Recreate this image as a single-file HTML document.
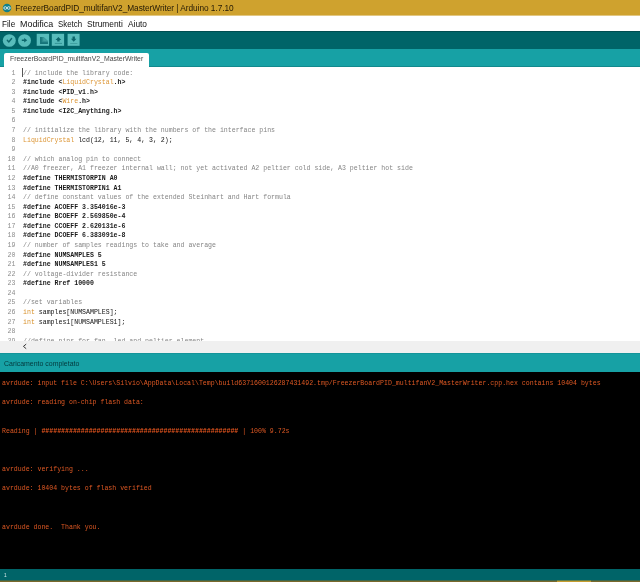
<!DOCTYPE html>
<html><head><meta charset="utf-8"><title>Arduino</title>
<style>
html,body{margin:0;padding:0;}
body{width:640px;height:582px;overflow:hidden;position:relative;background:#fff;font-family:"Liberation Sans",sans-serif;}
.abs{position:absolute;}
#title{left:0;top:0;width:640px;height:15.6px;background:#cfa22e;}
#title .t{position:absolute;left:15.3px;top:2.9px;font-size:8.3px;line-height:11px;color:#231905;white-space:nowrap;letter-spacing:-0.04px;}
#logo{position:absolute;left:0.75px;top:1.7px;}
#menu{left:0;top:15.6px;width:640px;height:15.6px;background:#fff;}
#menu span{position:absolute;top:2.3px;transform-origin:0 0;font-size:9.6px;line-height:12px;color:#111;white-space:nowrap;}
#tool{left:0;top:31.2px;width:640px;height:17.5px;background:#006468;}
#tabs{left:0;top:48.5px;width:640px;height:18.5px;background:#17a1a5;}
#tab{left:4px;top:52.5px;width:145px;height:15px;background:#fff;border-radius:2px 2px 0 0;}
#tab span{position:absolute;left:5.7px;top:0.8px;transform-origin:0 0;transform:scaleX(0.933);font-size:7.4px;line-height:11px;color:#454545;white-space:nowrap;}
.btn{position:absolute;background:#4db6ba;}
#editor{left:0;top:67px;width:640px;height:274px;background:#fff;overflow:hidden;}
#code{position:absolute;left:0;top:1.5999999999999943px;font-family:"Liberation Mono",monospace;font-size:6.575px;line-height:9.585px;white-space:pre;color:#222;}
.ln{height:9.585px;position:relative;padding-left:23px;}
.no{position:absolute;left:0;width:15.5px;text-align:right;color:#8c8c8c;}
.c{color:#858585;}
.p{color:#1a1a1a;font-weight:bold;}
.k{color:#dc9534;}
.t{color:#d8922e;}
.n{color:#111;}
#caret{left:22px;top:67.5px;width:1px;height:9px;background:#555;}
#hscroll{left:0;top:341px;width:640px;height:12px;background:#f0f0f0;}
#status{left:0;top:353px;width:640px;height:19px;background:#17a1a5;}
#status span{position:absolute;left:4px;top:4.7px;transform-origin:0 0;transform:scaleX(0.94);font-size:7.4px;line-height:11px;color:#04383c;white-space:nowrap;}
#console{left:0;top:372px;width:640px;height:197px;background:#000;overflow:hidden;}
#ctext{position:absolute;left:2px;top:6.899999999999977px;font-family:"Liberation Mono",monospace;font-size:6.575px;line-height:9.6px;white-space:pre;color:#de5823;}
.cl{height:9.6px;}
#foot{left:0;top:569px;width:640px;height:11px;background:#006468;}
#foot span{position:absolute;left:4.3px;top:1.8px;font-size:6px;line-height:9px;color:#d8ecec;transform-origin:0 0;transform:scaleX(0.8);}
#task{left:0;top:580px;width:640px;height:2px;background:linear-gradient(#3d664a 0,#3d664a 1px,#7a692c 1px);}
#taskhl{left:557px;top:580px;width:34px;height:2px;background:linear-gradient(#63804b 0,#63804b 1px,#c79d2f 1px);}
#code,#ctext,#title .t,#menu span,#tab span,#status span,#foot span{filter:blur(0.35px);}
#ctext b{color:#e8561f;}
</style></head><body>
<div id="title" class="abs"><svg id="logo" width="12" height="12" viewBox="0 0 12 12"><circle cx="6" cy="6" r="4.3" fill="#11808a"/><g fill="none" stroke="#e8f2f2" stroke-width="0.9"><ellipse cx="4.3" cy="6" rx="1.5" ry="1.3"/><ellipse cx="7.7" cy="6" rx="1.5" ry="1.3"/></g></svg><div class="t">FreezerBoardPID_multifanV2_MasterWriter | Arduino 1.7.10</div></div>
<div id="menu" class="abs"><span style="left:2.30px;transform:scaleX(0.853)">File</span><span style="left:19.70px;transform:scaleX(0.929)">Modifica</span><span style="left:57.70px;transform:scaleX(0.818)">Sketch</span><span style="left:86.70px;transform:scaleX(0.872)">Strumenti</span><span style="left:127.70px;transform:scaleX(0.869)">Aiuto</span></div>
<div class="abs" style="left:0;top:15px;width:640px;height:1px;background:#e2c782"></div>
<div id="tool" class="abs"></div>
<div id="tabs" class="abs"></div>
<div class="abs" style="left:0;top:31px;width:640px;height:1px;background:#004d51"></div><div class="abs" style="left:0;top:66px;width:640px;height:1px;background:#12898d"></div><div class="abs" style="left:0;top:353px;width:640px;height:1px;background:#14959a;z-index:3"></div>
<svg class="abs" style="left:0;top:31px" width="90" height="18" viewBox="0 31 90 18">
<g fill="#58bcbb"><ellipse cx="9.3" cy="40.5" rx="6.5" ry="6.3"/><ellipse cx="24.5" cy="40.5" rx="6.5" ry="6.3"/>
<rect x="36.7" y="33.8" width="12.4" height="12"/><rect x="51.8" y="33.8" width="12.3" height="12"/><rect x="67.6" y="33.8" width="12" height="12"/></g>
<path d="M7.3 40.3 L8.8 42 L11.6 38.5" fill="none" stroke="#0c676c" stroke-width="1.35" stroke-linecap="round" stroke-linejoin="round"/>
<g fill="#0c676c">
<path d="M21.8 39.5 H24.2 V38 L27.2 40.3 L24.2 42.6 V41.1 H21.8 Z"/>
<path d="M40.1 36.9 H43.6 L47.9 41 V43.9 H40.1 Z" fill="#2a8a8c"/>
<path d="M40.1 36.9 H41.6 V42.2 H47.9 V43.9 H40.1 Z" fill="#157479"/>
<path d="M43.2 36.9 L47.9 41.2 H43.2 Z" fill="#3f9fa0"/>
<path d="M58.4 37 L61.3 40 H59.6 V41.6 H57.2 V40 H55.5 Z"/><rect x="54.8" y="42.9" width="7.2" height="0.9" fill="#2d8f91"/>
<path d="M73.7 41.7 L76.5 38.7 H74.9 V36.5 H72.5 V38.7 H70.9 Z"/><rect x="70.2" y="43.2" width="7.2" height="0.8" fill="#3a9a9b"/>
</g></svg>
<div id="tab" class="abs"><span>FreezerBoardPID_multifanV2_MasterWriter</span></div>
<div id="editor" class="abs"><div id="code"><div class="ln"><span class="no">1</span><span class="c">// include the library code:</span></div><div class="ln"><span class="no">2</span><span class="p">#include &lt;</span><span class="k">LiquidCrystal</span><span class="p">.h&gt;</span></div><div class="ln"><span class="no">3</span><span class="p">#include &lt;PID_v1.h&gt;</span></div><div class="ln"><span class="no">4</span><span class="p">#include &lt;</span><span class="k">Wire</span><span class="p">.h&gt;</span></div><div class="ln"><span class="no">5</span><span class="p">#include &lt;I2C_Anything.h&gt;</span></div><div class="ln"><span class="no">6</span></div><div class="ln"><span class="no">7</span><span class="c">// initialize the library with the numbers of the interface pins</span></div><div class="ln"><span class="no">8</span><span class="k">LiquidCrystal</span><span class="n"> lcd(12, 11, 5, 4, 3, 2);</span></div><div class="ln"><span class="no">9</span></div><div class="ln"><span class="no">10</span><span class="c">// which analog pin to connect</span></div><div class="ln"><span class="no">11</span><span class="c">//A0 freezer, A1 freezer internal wall; not yet activated A2 peltier cold side, A3 peltier hot side</span></div><div class="ln"><span class="no">12</span><span class="p">#define THERMISTORPIN A0</span></div><div class="ln"><span class="no">13</span><span class="p">#define THERMISTORPIN1 A1</span></div><div class="ln"><span class="no">14</span><span class="c">// define constant values of the extended Steinhart and Hart formula</span></div><div class="ln"><span class="no">15</span><span class="p">#define ACOEFF 3.354016e-3</span></div><div class="ln"><span class="no">16</span><span class="p">#define BCOEFF 2.569850e-4</span></div><div class="ln"><span class="no">17</span><span class="p">#define CCOEFF 2.620131e-6</span></div><div class="ln"><span class="no">18</span><span class="p">#define DCOEFF 6.383091e-8</span></div><div class="ln"><span class="no">19</span><span class="c">// number of samples readings to take and average</span></div><div class="ln"><span class="no">20</span><span class="p">#define NUMSAMPLES 5</span></div><div class="ln"><span class="no">21</span><span class="p">#define NUMSAMPLES1 5</span></div><div class="ln"><span class="no">22</span><span class="c">// voltage-divider resistance</span></div><div class="ln"><span class="no">23</span><span class="p">#define Rref 10000</span></div><div class="ln"><span class="no">24</span></div><div class="ln"><span class="no">25</span><span class="c">//set variables</span></div><div class="ln"><span class="no">26</span><span class="t">int</span><span class="n"> samples[NUMSAMPLES];</span></div><div class="ln"><span class="no">27</span><span class="t">int</span><span class="n"> samples1[NUMSAMPLES1];</span></div><div class="ln"><span class="no">28</span></div><div class="ln"><span class="no">29</span><span class="c">//define pins for fan, led and peltier element</span></div></div></div>
<div id="caret" class="abs"></div>
<div id="hscroll" class="abs"><svg class="abs" style="left:20px;top:1px" width="10" height="10" viewBox="20 342 10 10"><path d="M26.2 344.1 L23.4 346.4 L26.2 348.7" fill="none" stroke="#3a3a3a" stroke-width="1"/></svg></div>
<div id="status" class="abs"><span>Caricamento completato</span></div>
<div id="console" class="abs"><div id="ctext"><div class="cl">avrdude: input file C:\Users\Silvio\AppData\Local\Temp\build6371600126287431492.tmp/FreezerBoardPID_multifanV2_MasterWriter.cpp.hex contains 10404 bytes</div><div class="cl">&nbsp;</div><div class="cl">avrdude: reading on-chip flash data:</div><div class="cl">&nbsp;</div><div class="cl">&nbsp;</div><div class="cl">Reading | <b>##################################################</b> | 100% 9.72s</div><div class="cl">&nbsp;</div><div class="cl">&nbsp;</div><div class="cl">&nbsp;</div><div class="cl">avrdude: verifying ...</div><div class="cl">&nbsp;</div><div class="cl">avrdude: 10404 bytes of flash verified</div><div class="cl">&nbsp;</div><div class="cl">&nbsp;</div><div class="cl">&nbsp;</div><div class="cl">avrdude done.  Thank you.</div></div></div>
<div id="foot" class="abs"><span>1</span></div>
<div id="task" class="abs"></div><div id="taskhl" class="abs"></div>
</body></html>
